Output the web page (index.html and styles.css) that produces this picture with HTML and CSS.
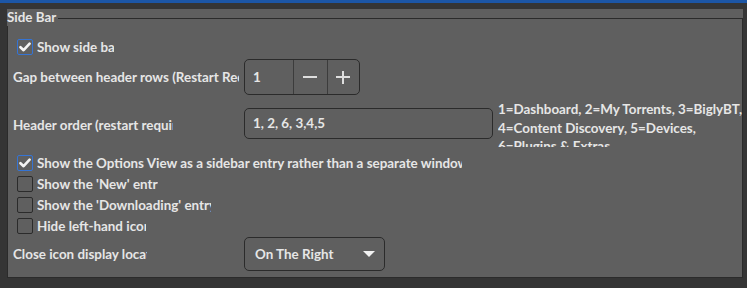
FILE: index.html
```html
<!DOCTYPE html>
<html lang="en">
<head>
    <meta charset="UTF-8">
    <title>Side Bar Options</title>
    <link rel="stylesheet" href="styles.css">
</head>
<body>
    <div class="titlebar"></div>

    <div class="panel">
        <div class="group">
            <span class="group-title">Side Bar</span>

            <!-- Show side bar -->
            <div class="check-row first">
                <span class="box checked">
                    <svg width="12" height="10" viewBox="0 0 12 10"><path d="M1.5 5.2 L4.6 8.2 L10.6 1.6" fill="none" stroke="#f4f4f4" stroke-width="2.6" stroke-linecap="round" stroke-linejoin="round"/></svg>
                </span>
                <span class="check-text w-side">Show side bar</span>
            </div>

            <!-- Header gap -->
            <div class="field-row row-gap">
                <span class="field-label"><span class="clip w-full">Gap between header rows (Restart Required)</span></span>
                <div class="spin">
                    <span class="spin-value">1</span>
                    <span class="spin-btn minus"><span class="bar-h"></span></span>
                    <span class="spin-btn plus"><span class="bar-h"></span><span class="bar-v"></span></span>
                </div>
            </div>

            <!-- Header order -->
            <div class="field-row row-order">
                <span class="field-label"><span class="clip w-order">Header order (restart required)</span></span>
                <div class="text-input">1, 2, 6, 3,4,5</div>
                <div class="desc">1=Dashboard, 2=My Torrents, 3=BiglyBT,<br>4=Content Discovery, 5=Devices,<br>6=Plugins &amp; Extras</div>
            </div>

            <div class="check-row options">
                <span class="box checked">
                    <svg width="12" height="10" viewBox="0 0 12 10"><path d="M1.5 5.2 L4.6 8.2 L10.6 1.6" fill="none" stroke="#f4f4f4" stroke-width="2.6" stroke-linecap="round" stroke-linejoin="round"/></svg>
                </span>
                <span class="check-text w-options">Show the Options View as a sidebar entry rather than a separate window</span>
            </div>
            <div class="check-row">
                <span class="box"></span>
                <span class="check-text w-new">Show the 'New' entry</span>
            </div>
            <div class="check-row">
                <span class="box"></span>
                <span class="check-text w-downloading">Show the 'Downloading' entry</span>
            </div>
            <div class="check-row">
                <span class="box"></span>
                <span class="check-text w-hide">Hide left-hand icons</span>
            </div>

            <!-- Close icon location -->
            <div class="field-row row-close">
                <span class="field-label"><span class="clip w-close">Close icon display location</span></span>
                <div class="combo">
                    <span>On The Right</span>
                    <svg width="12" height="6" viewBox="0 0 12 6"><path d="M0 0 H12 L6 6 Z" fill="#f2f2f2"/></svg>
                </div>
            </div>
        </div>
    </div>
</body>
</html>
```

FILE: styles.css
```css
/* General */
body {
    margin: 0;
    height: 288px;
    overflow: hidden;
    background-color: #353535;
    font-family: Lato, "Liberation Sans", sans-serif;
    font-size: 13.4px;
    font-weight: 700;
    color: #e6e6e6;
}

.titlebar {
    height: 3px;
    background-color: #1c56a6;
}

/* Group box */
.panel {
    width: 736px;
    margin: 6px 0 0 7px;
    padding-top: 9px;
    background-color: #5f5f5f;
}

.group {
    position: relative;
    border: 1px solid #2b2b2b;
    padding: 17px 0 6px 0;
}

.group-title {
    position: absolute;
    top: -10px;
    left: -1px;
    padding-right: 2px;
    line-height: 17px;
    background-color: #5f5f5f;
}

/* Checkbox rows */
.check-row {
    display: flex;
    align-items: center;
    height: 21px;
    padding-left: 9px;
}

.check-row.options {
    margin-top: 5px;
}

.box {
    display: flex;
    align-items: center;
    justify-content: center;
    width: 16px;
    height: 16px;
    box-sizing: border-box;
    border: 1px solid #2b2b2b;
    border-radius: 2px;
    margin-right: 4px;
    flex-shrink: 0;
}

.box.checked {
    border-color: #3574d4;
}

.check-text,
.clip {
    display: block;
    overflow: hidden;
    white-space: nowrap;
}

.w-side { width: 77px; }
.w-options { width: 425px; }
.w-new { width: 121px; }
.w-downloading { width: 174px; }
.w-hide { width: 109px; }
.w-full { width: 226px; }
.w-order { width: 160px; padding-top: 2px; }
.w-close { width: 134px; }

/* Label + control rows */
.field-row {
    display: flex;
    align-items: center;
    padding-left: 5px;
}

.field-label {
    width: 231px;
    flex-shrink: 0;
}

.row-gap {
    height: 36px;
    margin-top: 2px;
}

.row-order {
    height: 47px;
    margin-top: 5px;
}

.row-close {
    height: 34px;
    margin-top: 1px;
}

/* Spin box */
.spin {
    display: flex;
    width: 116px;
    height: 36px;
    box-sizing: border-box;
    border: 1px solid #2b2b2b;
    border-radius: 5px;
}

.spin-value {
    width: 48px;
    padding-left: 8px;
    box-sizing: border-box;
    line-height: 34px;
}

.spin-btn {
    position: relative;
    border-left: 1px solid #3c3c3c;
}

.spin-btn.minus { width: 33px; }
.spin-btn.plus { width: 31px; }

.bar-h,
.bar-v {
    position: absolute;
    background-color: #dedede;
}

.bar-h {
    width: 14px;
    height: 2px;
    top: 16px;
    left: 9px;
}

.plus .bar-h { left: 8px; }

.bar-v {
    width: 2px;
    height: 13px;
    top: 11px;
    left: 14px;
}

/* Text input */
.text-input {
    width: 249px;
    height: 31px;
    box-sizing: border-box;
    border: 1px solid #2b2b2b;
    border-radius: 5px;
    padding-left: 8px;
    line-height: 29px;
    flex-shrink: 0;
}

.desc {
    align-self: flex-start;
    height: 47px;
    overflow: hidden;
    margin-left: 5px;
    line-height: 18.5px;
    white-space: nowrap;
}

/* Combo box */
.combo {
    display: flex;
    align-items: center;
    justify-content: space-between;
    width: 141px;
    height: 34px;
    box-sizing: border-box;
    border: 1px solid #2b2b2b;
    border-radius: 5px;
    padding: 0 9px 0 10px;
}
```
